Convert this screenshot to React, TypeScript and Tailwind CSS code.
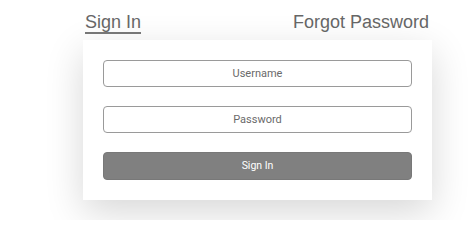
export default function App() {
  return (
    <div
      className="w-[474px] h-[220px] bg-white overflow-hidden pl-[83px] pt-[12px]"
      style={{ fontFamily: "Roboto, 'Liberation Sans', sans-serif" }}
    >
      <div className="w-[349px]">
        <div
          className="flex justify-between items-start px-[2px] text-[18px] leading-[20px] text-[#666666]"
          style={{ fontFamily: "'Liberation Sans', Arial, sans-serif" }}
        >
          <span className="border-b-2 border-[#777777]">Sign In</span>
          <span className="pr-[1px]">Forgot Password</span>
        </div>

        <form className="mt-[6px] bg-white p-5 flex flex-col gap-[19px] shadow-[0_12px_36px_rgba(0,0,0,0.16)]">
          <input
            type="text"
            placeholder="Username"
            className="h-[27px] w-full rounded-[4px] border border-[#9a9a9a] text-center text-[11px] placeholder:text-[#6a6a6a] outline-none"
          />
          <input
            type="password"
            placeholder="Password"
            className="h-[27px] w-full rounded-[4px] border border-[#9a9a9a] text-center text-[11px] placeholder:text-[#6a6a6a] outline-none"
          />
          <button
            type="button"
            className="h-[28px] w-full rounded-[4px] bg-[#808080] border border-[#787878] text-white text-[10.5px]"
          >
            Sign In
          </button>
        </form>
      </div>
    </div>
  );
}
